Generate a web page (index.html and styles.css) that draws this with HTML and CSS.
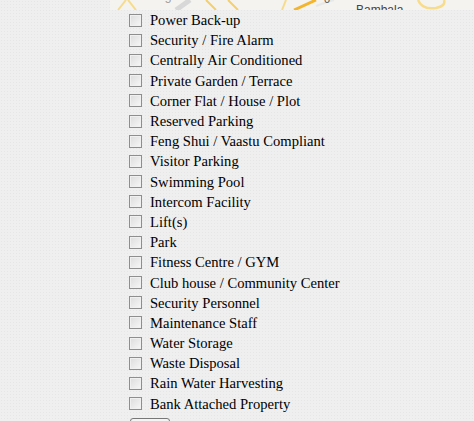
FILE: index.html
```html
<!DOCTYPE html>
<html>
<head>
<meta charset="utf-8">
<link rel="stylesheet" href="styles.css">
</head>
<body>
<div class="map">
  <svg class="roads" width="364" height="10" viewBox="0 0 364 10">
    <path d="M8 10 L16 0" stroke="#f6dc8a" stroke-width="2" fill="none"/>
    <path d="M18 0 L26 10" stroke="#f6dc8a" stroke-width="2" fill="none"/>
    <path d="M66 10 L80 0" stroke="#d8d8d8" stroke-width="5" fill="none"/>
    <path d="M96 0 L106 10" stroke="#f4cf6a" stroke-width="2" fill="none"/>
    <path d="M118 0 L128 10" stroke="#f4cf6a" stroke-width="2" fill="none"/>
    <path d="M172 10 L176 0" stroke="#f6dc8a" stroke-width="2" fill="none"/>
    <path d="M184 10 L206 0" stroke="#f3b52c" stroke-width="3" fill="none"/>
    <path d="M206 6 Q216 2 224 0" stroke="#e8e8e8" stroke-width="2" fill="none"/>
    <path d="M308 0 Q312 10 326 8 Q336 6 334 0" stroke="#f7dc8c" stroke-width="2.5" fill="none"/>
  </svg>
  <span class="num">5</span>
  <span class="zero">0</span>
  <span class="place">Bambala</span>
</div>
<ul class="amenities">
  <li><span class="box"></span>Power Back-up</li>
  <li><span class="box"></span>Security / Fire Alarm</li>
  <li><span class="box"></span>Centrally Air Conditioned</li>
  <li><span class="box"></span>Private Garden / Terrace</li>
  <li><span class="box"></span>Corner Flat / House / Plot</li>
  <li><span class="box"></span>Reserved Parking</li>
  <li><span class="box"></span>Feng Shui / Vaastu Compliant</li>
  <li><span class="box"></span>Visitor Parking</li>
  <li><span class="box"></span>Swimming Pool</li>
  <li><span class="box"></span>Intercom Facility</li>
  <li><span class="box"></span>Lift(s)</li>
  <li><span class="box"></span>Park</li>
  <li><span class="box"></span>Fitness Centre / GYM</li>
  <li><span class="box"></span>Club house / Community Center</li>
  <li><span class="box"></span>Security Personnel</li>
  <li><span class="box"></span>Maintenance Staff</li>
  <li><span class="box"></span>Water Storage</li>
  <li><span class="box"></span>Waste Disposal</li>
  <li><span class="box"></span>Rain Water Harvesting</li>
  <li><span class="box"></span>Bank Attached Property</li>
</ul>
<div class="actions"><button class="btn" type="button"></button></div>
</body>
</html>
```
FILE: styles.css
```css
html, body {
  margin: 0;
  padding: 0;
}
body {
  width: 474px;
  height: 421px;
  overflow: hidden;
  background-color: #efefef;
  background-image: radial-gradient(#e6e6e6 0.6px, transparent 0.8px);
  background-size: 3px 3px;
  font-family: "Liberation Serif", "Times New Roman", serif;
  font-size: 14.6px;
  color: #000;
}
.map {
  position: relative;
  margin-left: 110px;
  height: 10px;
  overflow: hidden;
  background: #f4f3f0;
}
.roads {
  display: block;
}
.num {
  position: absolute;
  left: 55px;
  top: -7px;
  font-family: "Liberation Sans", Arial, sans-serif;
  font-size: 11px;
  color: #999;
}
.zero {
  position: absolute;
  left: 214px;
  top: -7px;
  font-family: "Liberation Sans", Arial, sans-serif;
  font-size: 11px;
  color: #555;
}
.place {
  position: absolute;
  left: 246px;
  top: 3px;
  font-family: "Liberation Sans", Arial, sans-serif;
  font-size: 12px;
  color: #444;
}
.amenities {
  list-style: none;
  margin: 0;
  padding: 0 0 0 129px;
}
.amenities li {
  display: flex;
  align-items: center;
  height: 20.2px;
  line-height: 20px;
  white-space: nowrap;
}
.box {
  flex: none;
  width: 11px;
  height: 11px;
  margin-right: 8px;
  border: 1px solid #8e8e8e;
  background: linear-gradient(135deg, #dcdcdc, #f7f7f7);
  box-shadow: inset 0 0 0 1px #f0f0f0;
}
.actions {
  padding: 4px 0 0 130px;
}
.btn {
  display: block;
  width: 40px;
  height: 14px;
  border: 1px solid #777;
  border-radius: 3px;
  background: #f4f4f4;
  padding: 0;
}
```
